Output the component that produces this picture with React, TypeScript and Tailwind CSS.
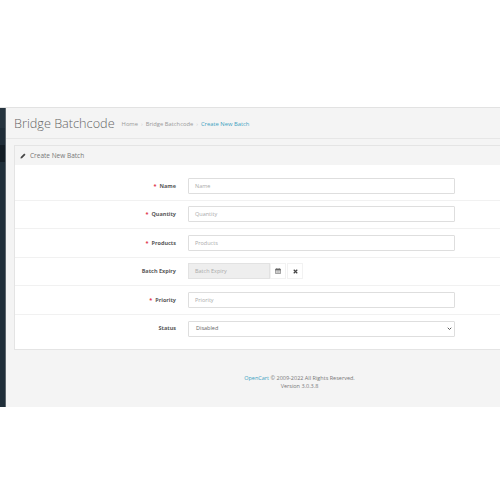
import React from "react";

const font = { fontFamily: '"Open Sans", sans-serif' };

function Req() {
  return <span className="text-[#e0314b] mr-[3px]">*</span>;
}

function Row({ label, required, children, h = "h-[28.5px]", last }: { label: string; required?: boolean; children: React.ReactNode; h?: string; last?: boolean }) {
  return (
    <div className={`flex ${last ? "items-start pt-[6px]" : "items-center border-b border-[#f1f1f1]"} ${h}`}>
      <div className="w-[161px] h-[16px] flex items-center justify-end shrink-0 text-[5.5px] font-bold text-[#5a5a5a]">
        {required && <Req />}
        {label}
      </div>
      <div className="ml-[12px] flex">{children}</div>
    </div>
  );
}

function Field({ placeholder }: { placeholder: string }) {
  return (
    <div className="w-[267px] h-[16px] bg-white border border-[#dedede] rounded-[1px] flex items-center pl-[6px] text-[5.5px] text-[#aaa]">
      {placeholder}
    </div>
  );
}

export default function App() {
  return (
    <div style={font} className="w-[500px] h-[500px] bg-white overflow-hidden flex flex-col">
      <div className="h-[108px] shrink-0 bg-white border-b border-[#e2e2e2]" />
      <div className="h-[299px] shrink-0 flex">
        <div className="w-[6px] shrink-0 bg-[#1f2e39] flex flex-col border-r border-[#5d666d]">
          <div className="h-[20px] bg-[#26343f]" />
          <div className="h-[17px] bg-[#1f2d38]" />
          <div className="h-[17px] bg-[#121c24]" />
          <div className="flex-1 bg-[#1f2e39]" />
        </div>
        <div className="flex-1 bg-[#f4f4f4] min-w-0">
          <div className="h-[31px] flex items-center pl-[8px] border-b border-[#e6e6e6] whitespace-nowrap">
            <span className="text-[12.7px] font-light text-[#666] leading-none mt-[1px]">Bridge Batchcode</span>
            <span className="ml-[7px] mt-[3px] text-[5.8px] text-[#999]">Home</span>
            <span className="ml-[3px] mt-[3px] text-[5.8px] text-[#ccc]">›</span>
            <span className="ml-[3px] mt-[3px] text-[5.8px] text-[#999]">Bridge Batchcode</span>
            <span className="ml-[3px] mt-[3px] text-[5.8px] text-[#ccc]">›</span>
            <span className="ml-[3px] mt-[3px] text-[5.8px] text-[#3d9fbf]">Create New Batch</span>
          </div>
          <div className="mt-[6px] ml-[8px] border border-[#e4e4e4] border-r-0 bg-white">
            <div className="h-[19px] bg-[#f4f4f4] flex items-center pl-[5px] text-[6.5px] text-[#777]">
              <svg width="6" height="6" viewBox="0 0 12 12" className="mr-[4px]">
                <path d="M8.5 1 11 3.5 4 10.5 1 11l.5-3z" fill="#444" />
              </svg>
              Create New Batch
            </div>
            <div className="pt-[7px]">
              <Row label="Name" required><Field placeholder="Name" /></Row>
              <Row label="Quantity" required><Field placeholder="Quantity" /></Row>
              <Row label="Products" required><Field placeholder="Products" /></Row>
              <Row label="Batch Expiry">
                <div className="w-[82px] h-[16px] bg-[#eeeeee] border border-[#e2e2e2] flex items-center pl-[6px] text-[5.5px] text-[#aaa]">Batch Expiry</div>
                <div className="w-[16px] h-[16px] bg-white border border-[#f2f2f2] flex items-center justify-center">
                  <svg width="6" height="6" viewBox="0 0 12 12">
                    <path d="M1 2h10v9H1z" fill="none" stroke="#666" strokeWidth="1.2" />
                    <path d="M1 2h10v3H1zM3 0h1.5v3H3zM7.5 0H9v3H7.5z" fill="#666" />
                    <path d="M2 7h8M2 9h8M4 5v5M6 5v5M8 5v5" stroke="#888" strokeWidth=".6" />
                  </svg>
                </div>
                <div className="ml-[1px] w-[16px] h-[16px] bg-white border border-[#f2f2f2] flex items-center justify-center">
                  <svg width="5" height="5" viewBox="0 0 10 10">
                    <path d="M1.5 1.5l7 7M8.5 1.5l-7 7" stroke="#444" strokeWidth="2.4" />
                  </svg>
                </div>
              </Row>
              <Row label="Priority" required><Field placeholder="Priority" /></Row>
              <Row label="Status" h="h-[34px]" last>
                <div className="w-[267px] h-[16px] bg-white border border-[#dedede] rounded-[1px] flex items-center justify-between pl-[7px] pr-[2px] text-[5.5px] text-[#666]">
                  Disabled
                  <svg width="5" height="5" viewBox="0 0 10 10">
                    <path d="M1.5 3.5 5 7l3.5-3.5" fill="none" stroke="#444" strokeWidth="1.8" />
                  </svg>
                </div>
              </Row>
            </div>
          </div>
          <div className="mt-[24px] pl-[93px] text-center text-[5.5px] leading-[8px] text-[#777]">
            <div><span className="text-[#3d9fbf]">OpenCart</span> © 2009-2022 All Rights Reserved.</div>
            <div>Version 3.0.3.8</div>
          </div>
        </div>
      </div>
    </div>
  );
}
